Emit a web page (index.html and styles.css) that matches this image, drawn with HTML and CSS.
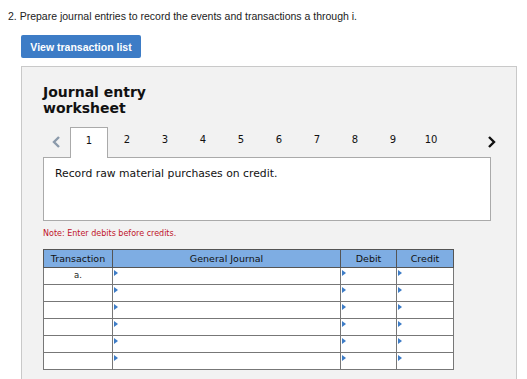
FILE: index.html
```html
<!DOCTYPE html>
<html>
<head>
	<meta charset="UTF-8" />
	<title>Journal entry worksheet</title>
	<link rel="stylesheet" href="styles.css">
</head>
<body>

<p class="question">2. Prepare journal entries to record the events and transactions a through i.</p>

<button class="btnList" type="button">View transaction list</button>

<div class="panel">
	<h2 class="titre">Journal entry<br />worksheet</h2>

	<div class="onglets">
		<span class="fleche prec">
			<svg width="9" height="12" viewBox="0 0 9 12"><path d="M7 1 L2 6 L7 11" fill="none" stroke="#8b9aab" stroke-width="2.4" /></svg>
		</span>
		<span class="onglet actif">1</span>
		<span class="onglet">2</span>
		<span class="onglet">3</span>
		<span class="onglet">4</span>
		<span class="onglet">5</span>
		<span class="onglet">6</span>
		<span class="onglet">7</span>
		<span class="onglet">8</span>
		<span class="onglet">9</span>
		<span class="onglet">10</span>
		<span class="fleche suiv">
			<svg width="9" height="12" viewBox="0 0 9 12"><path d="M2 1 L7 6 L2 11" fill="none" stroke="#111" stroke-width="2.4" /></svg>
		</span>
	</div>

	<div class="cadreTexte">Record raw material purchases on credit.</div>

	<div class="note">Note: Enter debits before credits.</div>

	<table class="journal">
		<tr>
			<th class="colTrans">Transaction</th>
			<th class="colJournal">General Journal</th>
			<th class="colDebit">Debit</th>
			<th class="colCredit">Credit</th>
		</tr>
		<tr><td class="trans">a.</td><td class="saisie"></td><td class="saisie"></td><td class="saisie"></td></tr>
		<tr><td class="trans"></td><td class="saisie"></td><td class="saisie"></td><td class="saisie"></td></tr>
		<tr><td class="trans"></td><td class="saisie"></td><td class="saisie"></td><td class="saisie"></td></tr>
		<tr><td class="trans"></td><td class="saisie"></td><td class="saisie"></td><td class="saisie"></td></tr>
		<tr><td class="trans"></td><td class="saisie"></td><td class="saisie"></td><td class="saisie"></td></tr>
		<tr><td class="trans"></td><td class="saisie"></td><td class="saisie"></td><td class="saisie"></td></tr>
	</table>
</div>

</body>
</html>
```

FILE: styles.css
```css
	body {
		margin:0;
		padding:8px 8px 0 8px;
		background:#fff;
		font-family:"Liberation Sans", Arial, sans-serif;
		color:#222;
	}
	.question {
		margin:2px 0 0 0;
		font-size:10.5px;
		line-height:12px;
	}
	.btnList {
		display:block;
		margin:13px 0 0 13px;
		width:120px;
		height:23px;
		border:none;
		border-radius:2px;
		background:#3d7cc6;
		color:#fff;
		font-family:"Liberation Sans", Arial, sans-serif;
		font-weight:bold;
		font-size:10.5px;
		padding:0;
	}
	.panel {
		margin:8px 0 0 13px;
		width:496px;
		height:330px;
		background:#f2f2f2;
		border:1px solid #c9c9c9;
		padding:17px 0 0 21px;
		box-sizing:border-box;
		font-family:"DejaVu Sans", Verdana, sans-serif;
	}
	.titre {
		margin:0;
		font-size:14px;
		line-height:16px;
		color:#111;
	}
	.onglets {
		display:flex;
		align-items:flex-start;
		margin-top:11px;
		height:30px;
	}
	.fleche {
		width:27px;
		height:30px;
		display:flex;
		align-items:center;
		justify-content:center;
	}
	.prec {
		padding-top:0;
	}
	.suiv {
		margin-left:28px;
	}
	.onglet {
		width:38px;
		height:30px;
		box-sizing:border-box;
		text-align:center;
		font-size:10px;
		line-height:26px;
		color:#111;
	}
	.actif {
		background:#fff;
		border:1px solid #aaa;
		border-bottom:none;
		height:31px;
		position:relative;
		z-index:1;
	}
	.cadreTexte {
		width:448px;
		height:64px;
		box-sizing:border-box;
		background:#fff;
		border:1px solid #aaa;
		padding:9px 11px;
		font-size:10.8px;
		line-height:13px;
		color:#111;
	}
	.note {
		margin-top:8px;
		font-size:8px;
		line-height:10px;
		color:#c0142a;
	}
	.journal {
		margin-top:10px;
		width:411px;
		border-collapse:collapse;
		font-size:9.5px;
	}
	.journal th {
		background:#7eade3;
		border:1px solid #555;
		height:17px;
		padding:0;
		font-weight:normal;
		color:#111;
		line-height:14px;
	}
	.colTrans { width:68px; }
	.colDebit { width:55px; }
	.colCredit { width:56px; }
	.journal td {
		background:#fff;
		border:1px solid #777;
		height:16px;
		padding:0;
	}
	.trans {
		text-align:center;
		vertical-align:top;
		line-height:14px;
		font-size:8.5px;
	}
	.saisie {
		position:relative;
	}
	.saisie::before {
		content:"";
		position:absolute;
		left:1px;
		top:2px;
		border-left:4px solid #3d7cc6;
		border-top:3px solid transparent;
		border-bottom:3px solid transparent;
	}
```
